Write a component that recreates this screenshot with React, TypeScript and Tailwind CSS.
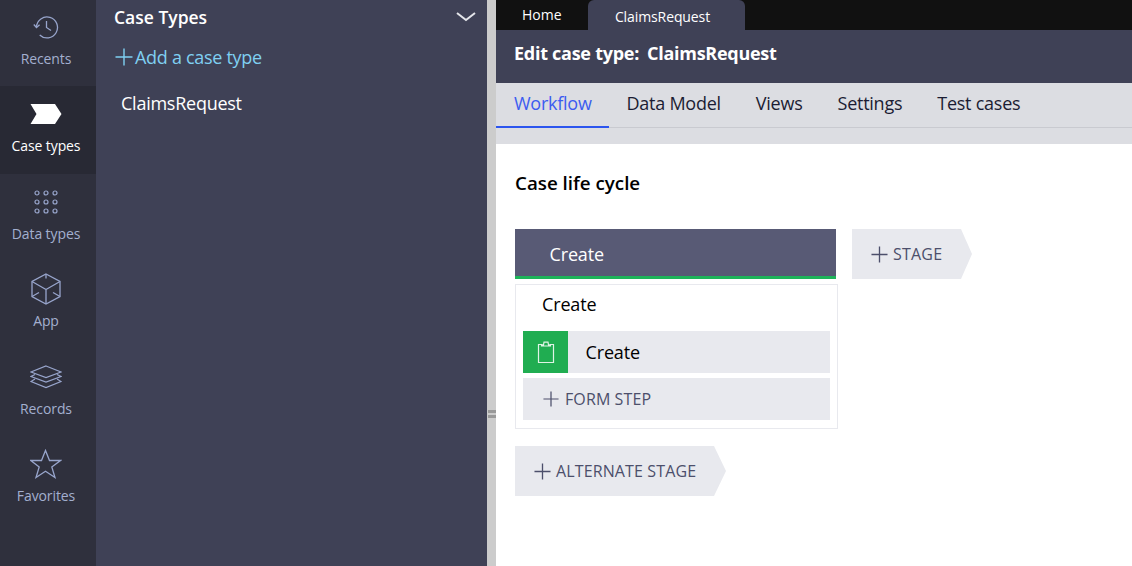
import React from "react";

const stroke = "#98a5cc";

function RailItem({ label, active, children }: { label: string; active?: boolean; children: React.ReactNode }) {
  return (
    <div className={"h-[87.5px] pr-[4px] flex flex-col items-center shrink-0 " + (active ? "bg-[#282934] text-white" : "text-[#a3afcf]")}>
      <div className="h-[34px] w-[36px] mt-[11px] flex items-center justify-center">{children}</div>
      <div className="mt-[5px] text-[14px] leading-[20px] tracking-[-0.1px]">{label}</div>
    </div>
  );
}

function Plus({ size = 18, color = "#4c4f6b" }: { size?: number; color?: string }) {
  return (
    <svg width={size} height={size} viewBox="0 0 18 18" className="shrink-0">
      <path d="M9 0.5V17.5M0.5 9H17.5" stroke={color} strokeWidth="1.4" fill="none" />
    </svg>
  );
}

export default function App() {
  return (
    <div className="w-[1132px] h-[566px] overflow-hidden flex bg-white font-['Open_Sans',sans-serif]">
      <aside className="w-[96px] shrink-0 bg-[#2f303d] flex flex-col -mt-[1.5px]">
        <RailItem label="Recents">
          <svg width="26" height="24" viewBox="0 0 26 24" fill="none" stroke={stroke} strokeWidth="1.3">
            <path d="M3.5 12a10.5 10.5 0 1 1 3.2 8" />
            <path d="M0.8 9.5L3.5 12.5L6.6 9.8" />
            <path d="M13.5 6v6.5l4.5 3" />
          </svg>
        </RailItem>
        <RailItem label="Case types" active>
          <svg width="32" height="20" viewBox="0 0 32 20">
            <path d="M0.5 0H25L31.5 10L25 20H0.5L6.5 10Z" fill="#fff" />
          </svg>
        </RailItem>
        <RailItem label="Data types">
          <svg width="24" height="24" viewBox="0 0 24 24" fill="none" stroke={stroke} strokeWidth="1.2">
            {[3, 12, 21].flatMap((y) =>
              [3, 12, 21].map((x) => <circle key={x + "-" + y} cx={x} cy={y} r="2" />)
            )}
          </svg>
        </RailItem>
        <RailItem label="App">
          <svg width="30" height="32" viewBox="0 0 30 32" fill="none" stroke={stroke} strokeWidth="1.3">
            <path d="M15 1L29 8.5V23.5L15 31L1 23.5V8.5Z" />
            <path d="M15 1V5.5M15 16.5V31M15 16.5L1 8.5M15 16.5L29 8.5M1 23.5L8 19.5M29 23.5L22 19.5" />
          </svg>
        </RailItem>
        <RailItem label="Records">
          <svg width="32" height="24" viewBox="0 0 32 24" fill="none" stroke={stroke} strokeWidth="1.2">
            <path d="M16 1L31 7L16 12.5L1 7Z" />
            <path d="M5 9.5L1 11.5L16 17L31 11.5L27 9.5" />
            <path d="M5 14L1 16.5L16 22.5L31 16.5L27 14" />
          </svg>
        </RailItem>
        <RailItem label="Favorites">
          <svg width="32" height="30" viewBox="0 0 32 30" fill="none" stroke={stroke} strokeWidth="1.3">
            <path d="M15.5 1.5L19.5 11.5H30.5L21.8 18L25 28.5L15.5 22.3L6 28.5L9.2 18L0.8 11.5H11.5Z" />
          </svg>
        </RailItem>
      </aside>

      <section className="w-[391px] shrink-0 bg-[#3f4156] text-white flex flex-col">
        <div className="h-[36px] pl-[18px] pr-[11px] pb-[2px] flex items-center justify-between">
          <span className="text-[17.5px] font-semibold leading-[22px]">Case Types</span>
          <svg width="20" height="12" viewBox="0 0 20 12" fill="none" stroke="#e4e5ea" strokeWidth="2">
            <path d="M1 2L10 9L19 2" />
          </svg>
        </div>
        <div className="h-[44px] pl-[19px] -mt-[1px] mb-[1px] flex items-center gap-[2px]">
          <Plus size={18} color="#7fd0f2" />
          <span className="text-[18px] leading-[24px] text-[#7fd0f2] tracking-[-0.3px]">Add a case type</span>
        </div>
        <div className="pl-[25px] pt-[2px] text-[18px] leading-[44px] h-[44px] flex items-center tracking-[-0.25px]">ClaimsRequest</div>
      </section>

      <div className="w-[9px] shrink-0 bg-[#cccccc] flex flex-col items-center justify-center gap-[2px] pt-[262px]">
        <div className="w-[8px] h-[3px] bg-[#999999]" />
        <div className="w-[8px] h-[3px] bg-[#999999]" />
      </div>

      <main className="flex-1 min-w-0 flex flex-col">
        <div className="h-[30px] bg-[#111111] flex items-stretch shrink-0">
          <div className="w-[92px] pl-[26px] text-white text-[14px] leading-[30px]">Home</div>
          <div className="w-[157px] pr-[8px] bg-[#3f4156] rounded-t-[6px] text-center text-white text-[14px] leading-[34px] tracking-[-0.1px]">ClaimsRequest</div>
        </div>
        <div className="h-[53px] pb-[7px] bg-[#3f4156] pl-[18px] flex items-center gap-[8px] text-white text-[18px] font-bold shrink-0 tracking-[-0.27px]">
          <span>Edit case type:</span>
          <span>ClaimsRequest</span>
        </div>
        <div className="h-[61px] bg-[#dcdde2] shrink-0">
          <div className="h-[45px] border-b border-[#c9cad0] flex text-[18px] text-[#1b1c33] tracking-[-0.25px]">
            <div className="w-[113px] h-[45px] border-b-2 border-[#2c55ee] text-[#3b5cf0] pl-[18px] leading-[40px]">Workflow</div>
            <div className="pl-[17.5px] leading-[40px]">Data Model</div>
            <div className="pl-[35px] leading-[40px]">Views</div>
            <div className="pl-[35px] leading-[40px]">Settings</div>
            <div className="pl-[35px] leading-[40px]">Test cases</div>
          </div>
        </div>

        <div className="flex-1 pl-[19px]">
          <h2 className="mt-[26px] text-[18.75px] font-semibold leading-[26px] text-black">Case life cycle</h2>
          <div className="mt-[33px] flex items-start">
            <div className="w-[323px]">
              <div className="w-[321px] h-[50px] bg-[#585a75] border-b-[3px] border-[#1eb45a] pl-[34.5px] text-white text-[18px] leading-[50px] tracking-[-0.15px]">Create</div>
              <div className="mt-[5px] h-[145px] border border-[#e8e9ee] px-[7px]">
                <div className="h-[46px] pl-[19px] text-[18px] leading-[38px] text-black tracking-[-0.15px]">Create</div>
                <div className="h-[42px] bg-[#e8e9ee] flex items-center">
                  <div className="w-[45px] h-[42px] bg-[#20ad51] flex items-center justify-center">
                    <svg width="18" height="22" viewBox="0 0 18 22" fill="none" stroke="#dff3e5" strokeWidth="1.2">
                      <path d="M5 3.5H1.5V21.5H16.5V3.5H13" />
                      <path d="M4.5 5H13.5V3.8H11.5L11 1.2H7L6.5 3.8H4.5Z" />
                    </svg>
                  </div>
                  <span className="ml-[17.5px] text-[18px] text-black tracking-[-0.15px]">Create</span>
                </div>
                <div className="mt-[5px] h-[42px] bg-[#e8e9ee] pl-[20px] flex items-center gap-[6px] text-[16px] text-[#4c4f6b] tracking-[0.1px]">
                  <Plus size={16} />
                  <span>FORM STEP</span>
                </div>
              </div>
            </div>
            <div className="ml-[14px] w-[120px] h-[50px] bg-[#e8e9ee] [clip-path:polygon(0_0,109px_0,120px_50%,109px_100%,0_100%)] pl-[19px] flex items-center gap-[5px] text-[16px] text-[#4c4f6b] tracking-[0.2px]">
              <Plus size={17} />
              <span>STAGE</span>
            </div>
          </div>
          <div className="mt-[17px] w-[211px] h-[50px] bg-[#e8e9ee] [clip-path:polygon(0_0,199px_0,211px_50%,199px_100%,0_100%)] pl-[19px] flex items-center gap-[5px] text-[16px] text-[#4c4f6b] tracking-[0.13px]">
            <Plus size={17} />
            <span>ALTERNATE STAGE</span>
          </div>
        </div>
      </main>
    </div>
  );
}
